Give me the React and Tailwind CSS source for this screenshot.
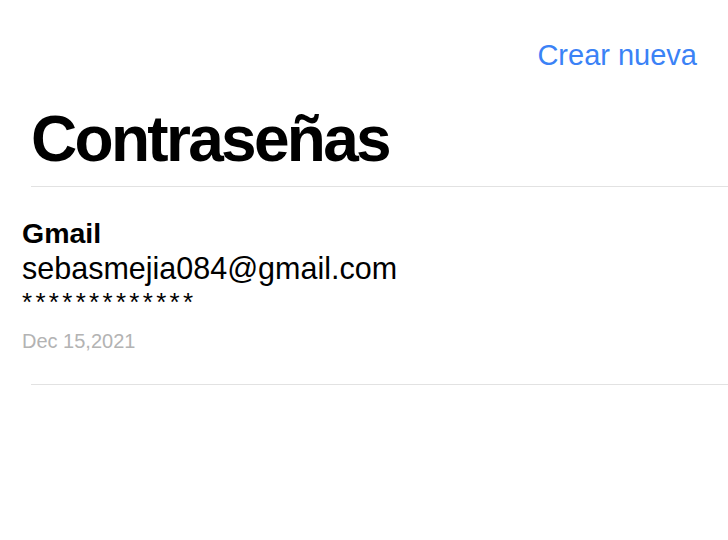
import React from 'react';

const entries = [
  {
    id: 1,
    site: 'Gmail',
    user: 'sebasmejia084@gmail.com',
    password: '*************',
    date: 'Dec 15,2021',
  },
];

const App = () => {
  return (
    <div className="min-h-screen w-[728px] bg-white font-['Liberation_Sans',Arial,sans-serif] text-black">
      <div className="flex justify-end pt-[38px] pr-[31px]">
        <button className="text-[29px] leading-[34px] text-[#3b82f6]">Crear nueva</button>
      </div>

      <h1 className="mt-[35px] pl-[31px] text-[64px] leading-[64px] font-bold tracking-[-2.7px]">
        Contraseñas
      </h1>

      <div className="mt-[15px] ml-[31px] h-px bg-[#e2e2e2]"></div>

      <ul>
        {entries.map((entry) => (
          <li key={entry.id}>
            <div className="px-[22px] pt-[32px]">
              <div className="text-[28.5px] leading-[28px] font-bold">{entry.site}</div>
              <div className="mt-[6px] text-[30.5px] leading-[30px]">{entry.user}</div>
              <div className="mt-[4px] text-[26px] leading-[30px] tracking-[3.3px]">{entry.password}</div>
              <div className="mt-[12px] text-[20px] leading-[24px] text-[#b3b3b3]">{entry.date}</div>
            </div>
            <div className="mt-[31px] ml-[31px] h-px bg-[#e2e2e2]"></div>
          </li>
        ))}
      </ul>
    </div>
  );
};

export default App;
